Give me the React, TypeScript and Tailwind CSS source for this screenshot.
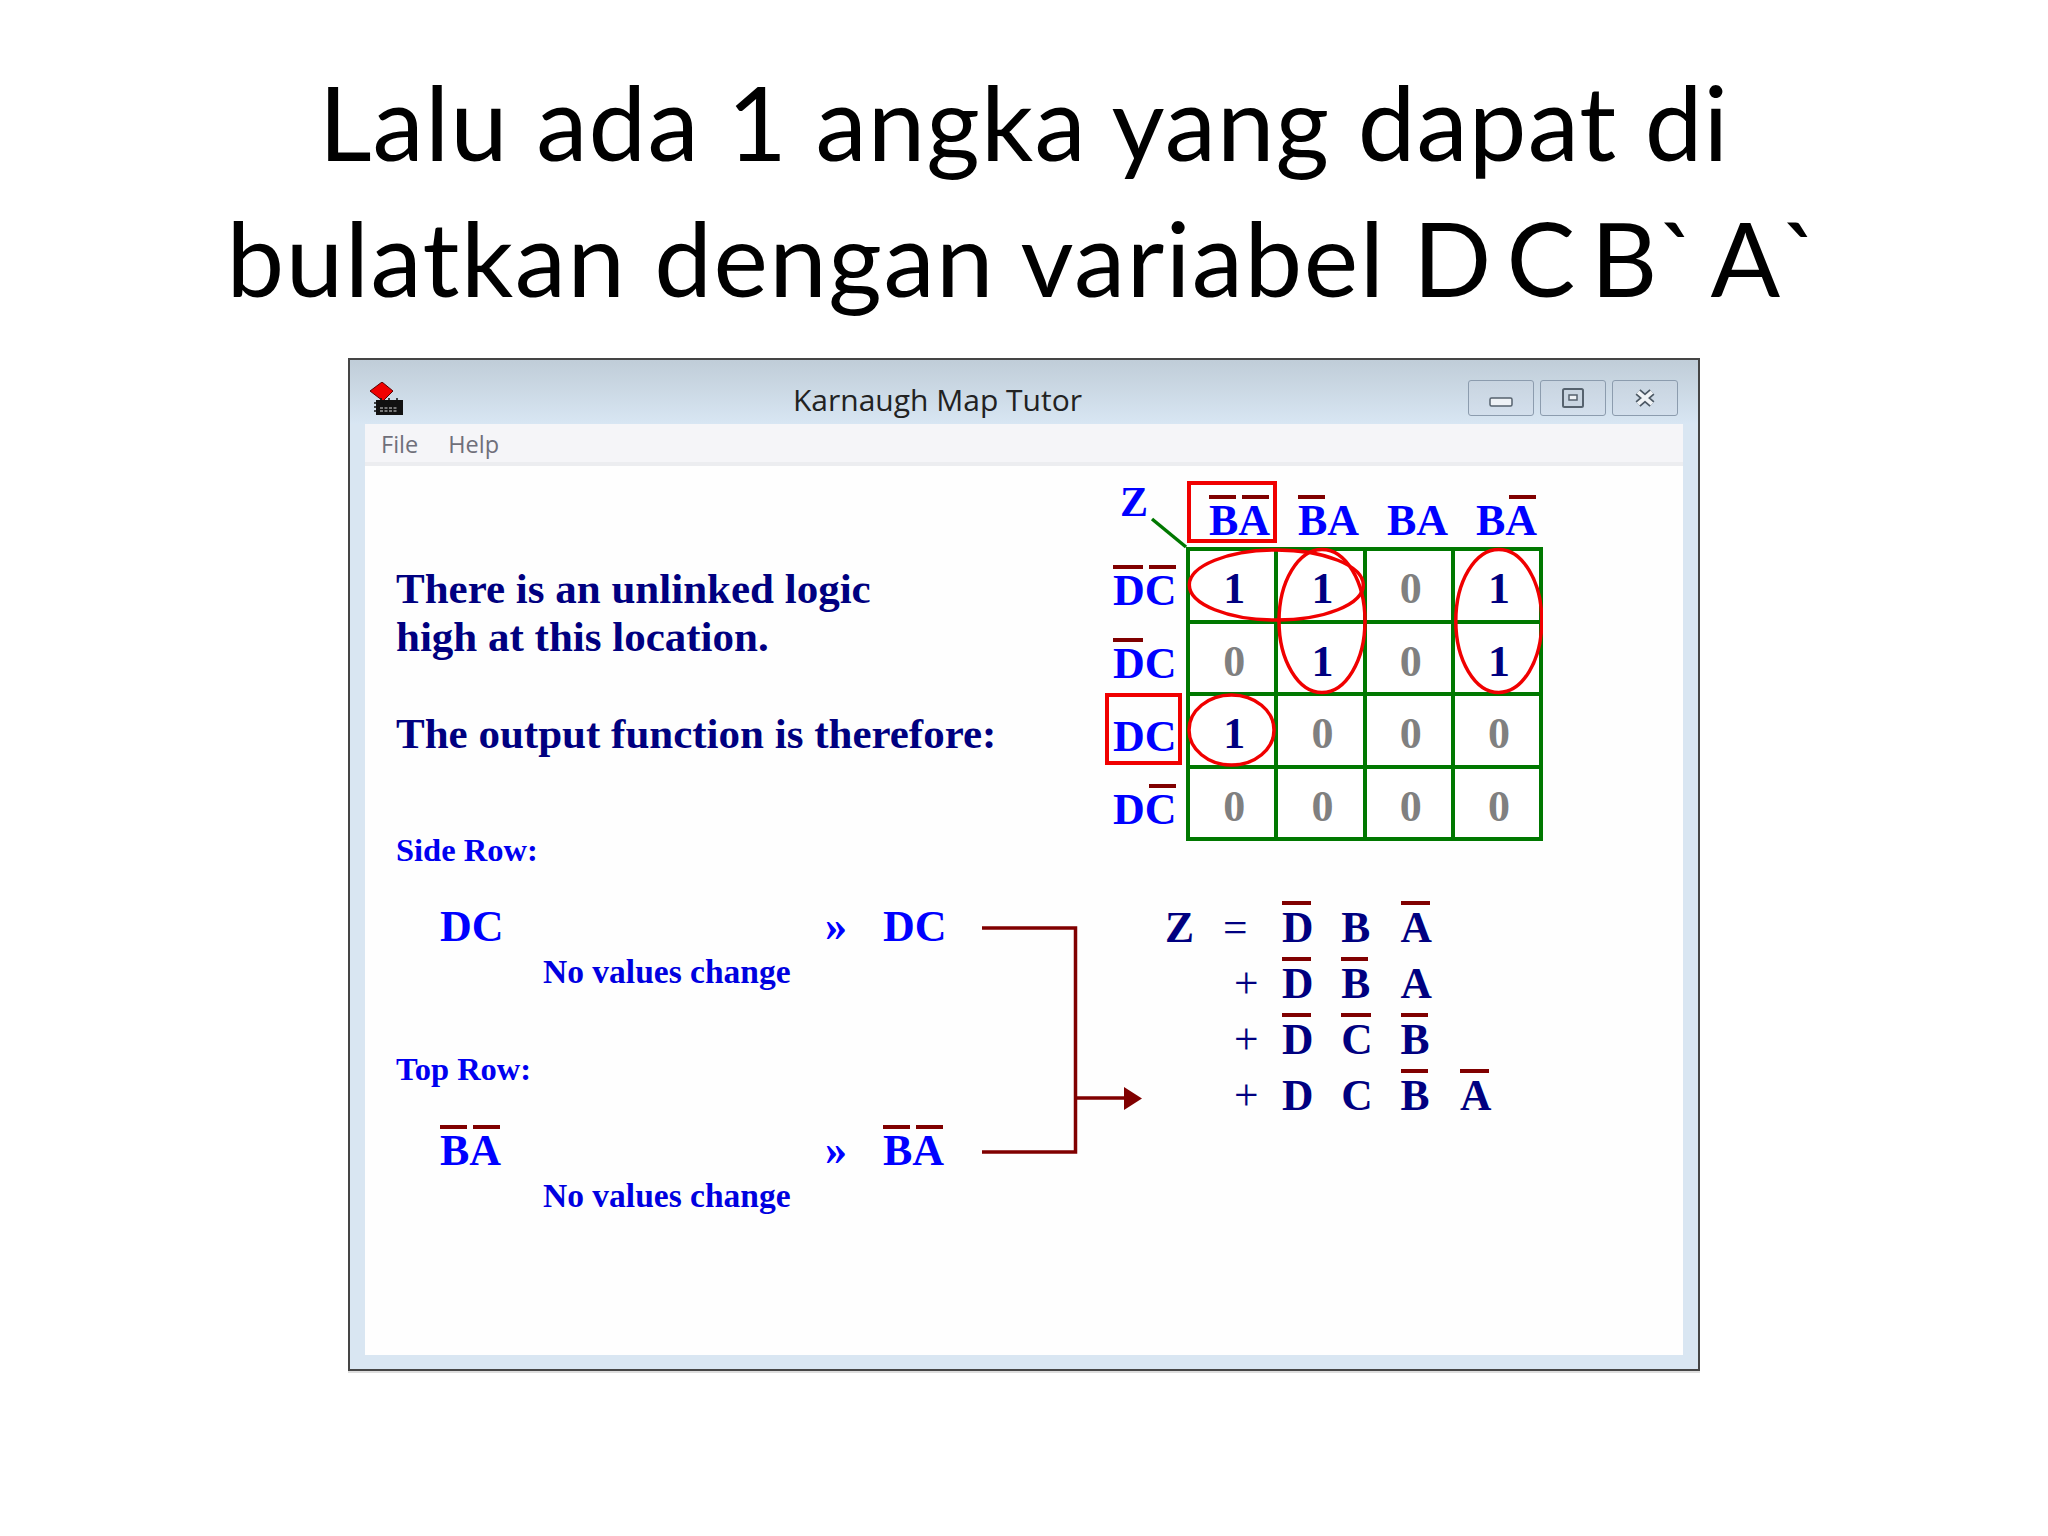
const serif = "font-['Liberation_Serif',serif] font-bold";

// letter with an optional bar on top, "!" before a letter means inverted
const Term = ({ text }: { text: string }) => {
  const parts = text.match(/!?[A-Z]/g) ?? [];
  return (
    <span className="inline-flex">
      {parts.map((p, i) => (
        <span key={i} className="relative inline-block">
          {p.replace("!", "")}
          {p.startsWith("!") && (
            <span
              className={`absolute top-[-2px] h-1 bg-[#800000] ${i > 0 ? "left-1 right-px" : "left-0 right-[2px]"}`}
            />
          )}
        </span>
      ))}
    </span>
  );
};

const AppIcon = () => (
  <svg width="34" height="33" viewBox="0 0 34 33" className="mt-[22px] ml-[19px] shrink-0">
    <polygon points="13,0 24,9 14,19 1,9" fill="#f00000" stroke="#5a0000" strokeWidth="1" />
    <rect x="7" y="18" width="27" height="15" fill="#111" />
    <path d="M7 21h-2M7 25h-2M7 29h-2M12 18v-2M20 18v-2M28 18v-2" stroke="#111" strokeWidth="1.5" />
    <path d="M11 26h18M11 29h18" stroke="#999" strokeWidth="1.5" strokeDasharray="3 1.5" />
  </svg>
);

const WinButton = ({ children }: { children: React.ReactNode }) => (
  <div className="flex h-9 w-[66px] items-center justify-center rounded-[3px] border border-[#8c9cae] bg-gradient-to-b from-[#c8d4e0] to-[#d3dfec]">
    {children}
  </div>
);

const TitleBar = () => (
  <div className="relative flex h-[64px] shrink-0 items-start bg-gradient-to-b from-[#c0cdd8] to-[#d8e6f3]">
    <AppIcon />
    <span className="ml-[390px] mt-[22px] font-['Open_Sans',sans-serif] text-[30px] leading-[36px] text-[#222222]">
      Karnaugh Map Tutor
    </span>
    <div className="ml-auto mr-5 mt-5 flex gap-[6px]">
      <WinButton>
        <svg width="24" height="10" viewBox="0 0 24 10" className="mt-2">
          <rect x="1" y="1" width="22" height="8" rx="1.5" fill="#eef2f6" stroke="#56626e" strokeWidth="1.5" />
        </svg>
      </WinButton>
      <WinButton>
        <svg width="24" height="20" viewBox="0 0 24 20" className="-mt-px">
          <rect x="2" y="1" width="20" height="18" rx="1.5" fill="#c9d5e1" stroke="#56626e" strokeWidth="2" />
          <rect x="8" y="7" width="8" height="5" fill="#eef2f6" stroke="#56626e" strokeWidth="1.5" />
        </svg>
      </WinButton>
      <WinButton>
        <svg width="24" height="20" viewBox="0 0 24 20" className="-mt-px">
          <path d="M5 4l14 12M19 4L5 16" stroke="#4c5864" strokeWidth="7.5" />
          <path d="M5 4l14 12M19 4L5 16" stroke="#f0f3f6" strokeWidth="4" />
        </svg>
      </WinButton>
    </div>
  </div>
);

const MenuBar = () => (
  <div className="flex h-[42px] shrink-0 gap-[30px] border-b-4 border-[#ecedf0] bg-[#f5f5f8] pl-4 pt-[5px] font-['Open_Sans',sans-serif] text-[23.5px] leading-[30px] text-[#6f6f7a]">
    <span>File</span>
    <span>Help</span>
  </div>
);

const Transition = ({ term }: { term: string }) => (
  <>
    <div className="flex pl-[44px] text-[44px] leading-[48px] text-[#0000ff]">
      <span className="w-[385px]">
        <Term text={term} />
      </span>
      <span className="w-[58px]">»</span>
      <Term text={term} />
    </div>
    <div className="mt-px ml-[147px] text-[33.5px] leading-[40px] text-[#0000e0]">No values change</div>
  </>
);

const LeftColumn = () => (
  <div className={`w-[610px] shrink-0 pl-[31px] pt-[99px] ${serif}`}>
    <div className="whitespace-nowrap text-[43px] leading-[48px] text-[#000080]">
      <p>There is an unlinked logic</p>
      <p>high at this location.</p>
      <p className="mt-[49px]">The output function is therefore:</p>
    </div>
    <p className="mt-[72px] text-[32.5px] leading-[40px] text-[#0000f0]">Side Row:</p>
    <div className="mt-[33px]">
      <Transition term="DC" />
    </div>
    <p className="mt-[57px] text-[32.5px] leading-[40px] text-[#0000f0]">Top Row:</p>
    <div className="mt-[38px]">
      <Transition term="!B!A" />
    </div>
  </div>
);

const headers = ["!B!A", "!BA", "BA", "B!A"];
const sides = ["!D!C", "!DC", "DC", "D!C"];
const cells = [
  [1, 1, 0, 1],
  [0, 1, 0, 1],
  [1, 0, 0, 0],
  [0, 0, 0, 0],
];

const KarnaughMap = () => (
  <div className={`relative ml-[130px] mt-[15px] h-[360px] w-[438px] ${serif} text-[44px] leading-[48px] text-[#0000ff]`}>
    <div className="flex h-[66px]">
      <div className="w-[81px] pl-[15px] text-[42px] leading-[42px]">Z</div>
      <div className="grid grid-cols-[repeat(4,89px)] pt-4">
        {headers.map((h) => (
          <div key={h} className="pl-[23px]">
            <Term text={h} />
          </div>
        ))}
      </div>
    </div>
    <div className="flex">
      <div className="relative w-[81px]">
        {sides.map((s) => (
          <div key={s} className="h-[73px] pl-2 pt-[20px]">
            <Term text={s} />
          </div>
        ))}
        <div className="absolute left-0 top-[146px] h-[72px] w-[77px] border-4 border-[#f00000]" />
      </div>
      <div className="grid h-[294px] w-[357px] grid-cols-4 grid-rows-4 gap-1 bg-[#007800] p-1">
        {cells.flat().map((v, i) => (
          <div
            key={i}
            className={`flex items-center justify-center bg-white pl-1 pt-2 ${v ? "text-[#000080]" : "text-[#808080]"}`}
          >
            {v}
          </div>
        ))}
      </div>
    </div>
    <div className="absolute left-[82px] top-0 h-[62px] w-[90px] border-4 border-[#f00000]" />
    <svg viewBox="0 0 438 360" className="pointer-events-none absolute inset-0 h-full w-full" fill="none">
      <line x1="47" y1="38" x2="81" y2="66" stroke="#007800" strokeWidth="3.5" />
      <g stroke="#f00000" strokeWidth="3.5">
        <ellipse cx="171.3" cy="104" rx="87" ry="35" />
        <ellipse cx="217" cy="140" rx="43" ry="71.5" />
        <ellipse cx="393.8" cy="140" rx="43" ry="71.5" />
        <ellipse cx="126.5" cy="249" rx="42.5" ry="35" />
      </g>
    </svg>
  </div>
);

const equation = [
  ["Z", "=", "!D", "B", "!A", ""],
  ["", "+", "!D", "!B", "A", ""],
  ["", "+", "!D", "!C", "!B", ""],
  ["", "+", "D", "C", "!B", "!A"],
];

const Connector = () => (
  <svg width="160" height="229" viewBox="0 0 160 229" className="ml-[7px] mt-[23px] shrink-0" fill="none">
    <path d="M0 2H93.5V226H0M93.5 172H144" stroke="#800000" strokeWidth="3.5" />
    <polygon points="142,161 160,172.5 142,184" fill="#800000" />
  </svg>
);

const Equation = () => (
  <div className={`ml-[23px] grid grid-cols-[58px_59px_repeat(4,59.3px)] auto-rows-[56px] ${serif} text-[43.5px] leading-[48px] text-[#000080]`}>
    {equation.flat().map((t, i) =>
      t === "=" ? (
        <span key={i} className="font-normal">=</span>
      ) : t === "+" ? (
        <span key={i} className="pl-[11px] font-normal">+</span>
      ) : (
        <span key={i}>{t && <Term text={t} />}</span>
      )
    )}
  </div>
);

const RightColumn = () => (
  <div className="flex-1">
    <KarnaughMap />
    <div className="mt-[62px] flex items-start">
      <Connector />
      <Equation />
    </div>
  </div>
);

const Corner = ({ className }: { className: string }) => (
  <svg width="7" height="7" viewBox="0 0 7 7" className={`absolute top-0 ${className}`}>
    <polygon points="0,0 7,0 0,7" fill="#222" />
  </svg>
);

const TutorWindow = () => (
  <div className="relative mt-[33px] flex h-[1013px] w-[1352px] flex-col border-2 border-[#454545] bg-[#d9e6f2] shadow-[0_2px_0_#dddddd]">
    <Corner className="left-0" />
    <Corner className="right-0 -scale-x-100" />
    <TitleBar />
    <div className="mx-[15px] mb-[14px] flex min-h-0 flex-1 flex-col">
      <MenuBar />
      <div className="flex flex-1 bg-[#fefefe]">
        <LeftColumn />
        <RightColumn />
      </div>
    </div>
  </div>
);

export default function App() {
  return (
    <div className="flex min-h-screen w-full flex-col items-center bg-white pt-[53px]">
      <h1 className="text-center font-['Lato',sans-serif] text-[103px] font-normal leading-[136px] tracking-[1.1px] text-black">
        Lalu ada 1 angka yang dapat di
        <br />
        <span className="tracking-[1.5px]">bulatkan dengan variabel</span>{" "}
        <span className="tracking-normal [word-spacing:-11px]">D C B` A`</span>
      </h1>
      <TutorWindow />
    </div>
  );
}
